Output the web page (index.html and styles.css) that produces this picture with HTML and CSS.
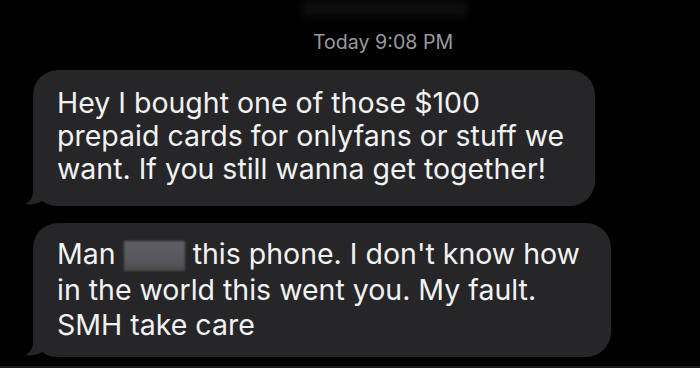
FILE: index.html
```html
<!DOCTYPE html>
<html lang="en">
<head>
    <meta charset="UTF-8">
    <meta name="viewport" content="width=device-width, initial-scale=1.0">
    <title>Messages</title>
    <link rel="stylesheet" href="styles.css">
</head>
<body>

<div class="thread">
    <div class="header-blur"></div>

    <div class="timestamp">Today 9:08 PM</div>

    <div class="bubble first">
        <p>Hey I bought one of those $100<br>prepaid cards for onlyfans or stuff we<br>want. If you still wanna get together!</p>
        <svg class="tail" width="30" height="30" viewBox="0 0 30 30"><path d="M8 0 L8 14 C8 22 5 26 0 28 C6 29 12 28 17 25 C20 27 24 29 30 30 L30 0 Z" fill="#262629"/></svg>
    </div>

    <div class="bubble second">
        <p>Man <span class="redacted"></span> this phone. I don't know how<br>in the world this went you. My fault.<br>SMH take care</p>
        <svg class="tail" width="30" height="30" viewBox="0 0 30 30"><path d="M8 0 L8 14 C8 22 5 26 0 28 C6 29 12 28 17 25 C20 27 24 29 30 30 L30 0 Z" fill="#262629"/></svg>
    </div>

    <div class="bottom-line"></div>
</div>

</body>
</html>
```

FILE: styles.css
```css
body {
    margin: 0;
    background-color: #000;
    font-family: Inter, "Liberation Sans", Arial, sans-serif;
    width: 700px;
    height: 368px;
    overflow: hidden;
}

.thread {
    display: flex;
    flex-direction: column;
    align-items: flex-start;
    height: 368px;
}

.header-blur {
    width: 165px;
    height: 17px;
    margin-left: 302px;
    background-color: #0c0c0d;
    filter: blur(3px);
}

.timestamp {
    margin-left: 313px;
    margin-top: 13px;
    font-size: 19.6px;
    line-height: 24px;
    color: #9a9a9e;
}

.bubble {
    position: relative;
    margin-left: 33px;
    background-color: #262629;
    border-radius: 25px;
    padding: 16px 31px 21px 24px;
}

.bubble p {
    margin: 0;
    font-size: 28.5px;
    line-height: 33px;
    color: #f2f2f2;
}

.first {
    margin-top: 16px;
}

.second {
    margin-top: 17px;
    padding-top: 13px;
    padding-bottom: 14px;
}

.second p {
    line-height: 35.5px;
}

.tail {
    position: absolute;
    left: -8px;
    bottom: 0;
}

.redacted {
    display: inline-block;
    width: 61px;
    height: 30px;
    vertical-align: -7px;
    background: linear-gradient(#5e5e63, #56565b 70%, #4a4a4e);
    filter: blur(1px);
}

.bottom-line {
    margin-top: auto;
    width: 700px;
    height: 2px;
    background-color: #1c1c1e;
}
```
